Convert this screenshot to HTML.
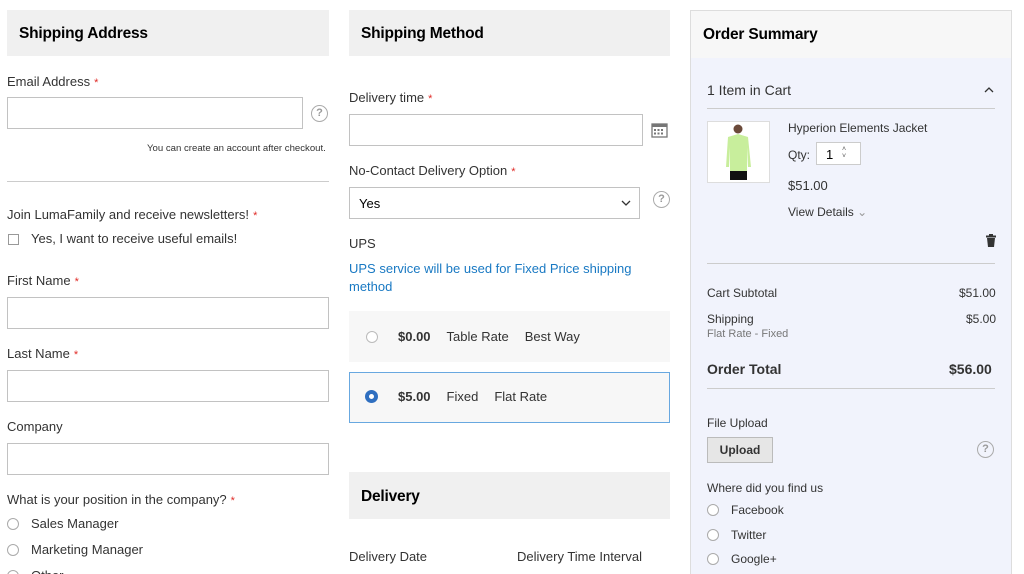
<!DOCTYPE html>
<html><head><meta charset="utf-8"><style>
*{box-sizing:border-box;margin:0;padding:0}
html,body{width:1024px;height:574px;overflow:hidden}
body{background:#fff;font-family:"Liberation Sans",Arial,sans-serif;color:#333;position:relative}
.a{position:absolute}
.hd{position:absolute;background:#f0f0f0;height:46px;font-weight:bold;font-size:15.5px;color:#000;padding:15px 0 0 12px;letter-spacing:-0.2px}
.lb{position:absolute;font-size:13px;color:#333}
.req{color:#e02b27;font-size:11px;margin-left:4px}
.in{position:absolute;border:1px solid #c2c2c2;background:#fff;height:32px}
.q{position:absolute;width:17px;height:17px;border:1.5px solid #aaa;border-radius:50%;color:#999;font-size:11px;text-align:center;line-height:14px;font-weight:bold}
.rad{position:absolute;width:12px;height:12px;border:1px solid #aaa;border-radius:50%;background:#fff}
</style></head><body>
<div class="hd" style="left:7px;top:10px;width:322px">Shipping Address</div>
<div class="lb" style="left:7px;top:74px">Email Address<span class="req">*</span></div>
<div class="in" style="left:7px;top:97px;width:296px"></div>
<div class="q" style="left:311px;top:105px">?</div>
<div class="lb" style="left:147px;top:143px;font-size:9.6px">You can create an account after checkout.</div>
<div class="a" style="left:7px;top:181px;width:322px;height:1px;background:#ccc"></div>
<div class="lb" style="left:7px;top:207px">Join LumaFamily and receive newsletters!<span class="req">*</span></div>
<div class="a" style="left:8px;top:234px;width:11px;height:11px;border:1px solid #999"></div>
<div class="lb" style="left:31px;top:231px">Yes, I want to receive useful emails!</div>
<div class="lb" style="left:7px;top:273px">First Name<span class="req">*</span></div>
<div class="in" style="left:7px;top:297px;width:322px"></div>
<div class="lb" style="left:7px;top:346px">Last Name<span class="req">*</span></div>
<div class="in" style="left:7px;top:370px;width:322px"></div>
<div class="lb" style="left:7px;top:419px">Company</div>
<div class="in" style="left:7px;top:443px;width:322px"></div>
<div class="lb" style="left:7px;top:492px">What is your position in the company?<span class="req">*</span></div>
<div class="rad" style="left:7px;top:518px"></div><div class="lb" style="left:31px;top:516px">Sales Manager</div>
<div class="rad" style="left:7px;top:544px"></div><div class="lb" style="left:31px;top:542px">Marketing Manager</div>
<div class="rad" style="left:7px;top:570px"></div><div class="lb" style="left:31px;top:568px">Other</div>
<div class="hd" style="left:349px;top:10px;width:321px">Shipping Method</div>
<div class="lb" style="left:349px;top:90px">Delivery time<span class="req">*</span></div>
<div class="in" style="left:349px;top:114px;width:294px"></div>
<svg class="a" style="left:651px;top:122px" width="17" height="16" viewBox="0 0 17 16"><rect x="1" y="2" width="15" height="13" fill="none" stroke="#777" stroke-width="1.3"/><rect x="1" y="2" width="15" height="3" fill="#777"/><g fill="#777"><rect x="3" y="7" width="2" height="2"/><rect x="6.5" y="7" width="2" height="2"/><rect x="10" y="7" width="2" height="2"/><rect x="3" y="10.5" width="2" height="2"/><rect x="6.5" y="10.5" width="2" height="2"/><rect x="10" y="10.5" width="2" height="2"/></g></svg>
<div class="lb" style="left:349px;top:163px">No-Contact Delivery Option<span class="req">*</span></div>
<div class="in" style="left:349px;top:187px;width:291px;font-size:13px;padding:8px 0 0 9px;color:#000">Yes<svg class="a" style="right:8px;top:12px" width="10" height="7"><path d="M1 1l4 4 4-4" fill="none" stroke="#333" stroke-width="1.3"/></svg></div>
<div class="q" style="left:653px;top:191px">?</div>
<div class="lb" style="left:349px;top:236px">UPS</div>
<div class="lb" style="left:349px;top:260px;color:#1979c3;line-height:18px;width:300px">UPS service will be used for Fixed Price shipping method</div>
<div class="a" style="left:349px;top:311px;width:321px;height:51px;background:#f7f7f7"></div>
<div class="rad" style="left:366px;top:331px;border-color:#bbb"></div>
<div class="lb" style="left:398px;top:329px"><b>$0.00</b><span style="margin-left:16px">Table Rate</span><span style="margin-left:16px">Best Way</span></div>
<div class="a" style="left:349px;top:372px;width:321px;height:51px;background:#f7f7f7;border:1px solid #68a8e0"></div>
<div class="a" style="left:365px;top:390px;width:13px;height:13px;border-radius:50%;background:#fff;border:4px solid #2f6fc0"></div>
<div class="lb" style="left:398px;top:389px"><b>$5.00</b><span style="margin-left:16px">Fixed</span><span style="margin-left:16px">Flat Rate</span></div>
<div class="hd" style="left:349px;top:472px;width:321px;height:47px;padding-top:16px">Delivery</div>
<div class="lb" style="left:349px;top:549px">Delivery Date</div>
<div class="lb" style="left:517px;top:549px">Delivery Time Interval</div>
<div class="a" style="left:690px;top:10px;width:322px;height:570px;background:#f1f3fc;border:1px solid #ddd"></div>
<div class="a" style="left:691px;top:11px;width:320px;height:47px;background:#f7f7f7;font-weight:bold;font-size:15.5px;color:#000;padding:15px 0 0 12px;letter-spacing:-0.2px">Order Summary</div>
<div class="lb" style="left:707px;top:82px;font-size:14px">1 Item in Cart</div>
<svg class="a" style="left:984px;top:86px" width="10" height="7"><path d="M1 6l4-4 4 4" fill="none" stroke="#333" stroke-width="1.3"/></svg>
<div class="a" style="left:707px;top:108px;width:288px;height:1px;background:#ccc"></div>
<div class="a" style="left:707px;top:121px;width:63px;height:62px;background:#fff;border:1px solid #ddd"></div>
<svg class="a" style="left:720px;top:122px" width="36" height="60"><circle cx="18" cy="7" r="4.5" fill="#6b4a3a"/><path d="M8 15l10-3 10 3 3 30-3 0-1-20 0 30h-17l0-30-1 20h-3z" fill="#c8ee9c"/><rect x="10" y="49" width="17" height="9" fill="#111"/></svg>
<div class="lb" style="left:788px;top:121px;font-size:12px">Hyperion Elements Jacket</div>
<div class="lb" style="left:788px;top:148px;font-size:12px">Qty:</div>
<div class="a" style="left:816px;top:142px;width:45px;height:23px;background:#fff;border:1px solid #ccc;font-size:13px;padding:4px 0 0 9px;color:#000">1<span style="position:absolute;left:25px;top:3px;font-size:7px;line-height:7px;color:#555">˄<br>˅</span></div>
<div class="lb" style="left:788px;top:178px;font-size:13px">$51.00</div>
<div class="lb" style="left:788px;top:205px;font-size:12px">View Details <span style="color:#999">⌄</span></div>
<svg class="a" style="left:986px;top:234px" width="10" height="13"><rect x="0" y="1.5" width="10" height="2" fill="#333"/><rect x="3" y="0" width="4" height="2" fill="#333"/><path d="M1 4h8l-1 9H2z" fill="#333"/></svg>
<div class="a" style="left:707px;top:263px;width:288px;height:1px;background:#ccc"></div>
<div class="lb" style="left:707px;top:286px;font-size:12px">Cart Subtotal</div><div class="lb" style="left:959px;top:286px;font-size:12px">$51.00</div>
<div class="lb" style="left:707px;top:312px;font-size:12px">Shipping</div><div class="lb" style="left:966px;top:312px;font-size:12px">$5.00</div>
<div class="lb" style="left:707px;top:328px;font-size:11px;color:#777">Flat Rate - Fixed</div>
<div class="lb" style="left:707px;top:361px;font-size:14px;font-weight:bold">Order Total</div><div class="lb" style="left:949px;top:361px;font-size:14px;font-weight:bold">$56.00</div>
<div class="a" style="left:707px;top:388px;width:288px;height:1px;background:#ccc"></div>
<div class="lb" style="left:707px;top:416px;font-size:12px">File Upload</div>
<div class="a" style="left:707px;top:437px;width:66px;height:26px;background:#e6e6e6;border:1px solid #bbb;font-size:12px;font-weight:bold;text-align:center;line-height:24px">Upload</div>
<div class="q" style="left:977px;top:441px">?</div>
<div class="lb" style="left:707px;top:481px;font-size:12px">Where did you find us</div>
<div class="rad" style="left:707px;top:504px"></div><div class="lb" style="left:731px;top:503px;font-size:12px">Facebook</div>
<div class="rad" style="left:707px;top:529px"></div><div class="lb" style="left:731px;top:528px;font-size:12px">Twitter</div>
<div class="rad" style="left:707px;top:553px"></div><div class="lb" style="left:731px;top:552px;font-size:12px">Google+</div>
</body></html>
